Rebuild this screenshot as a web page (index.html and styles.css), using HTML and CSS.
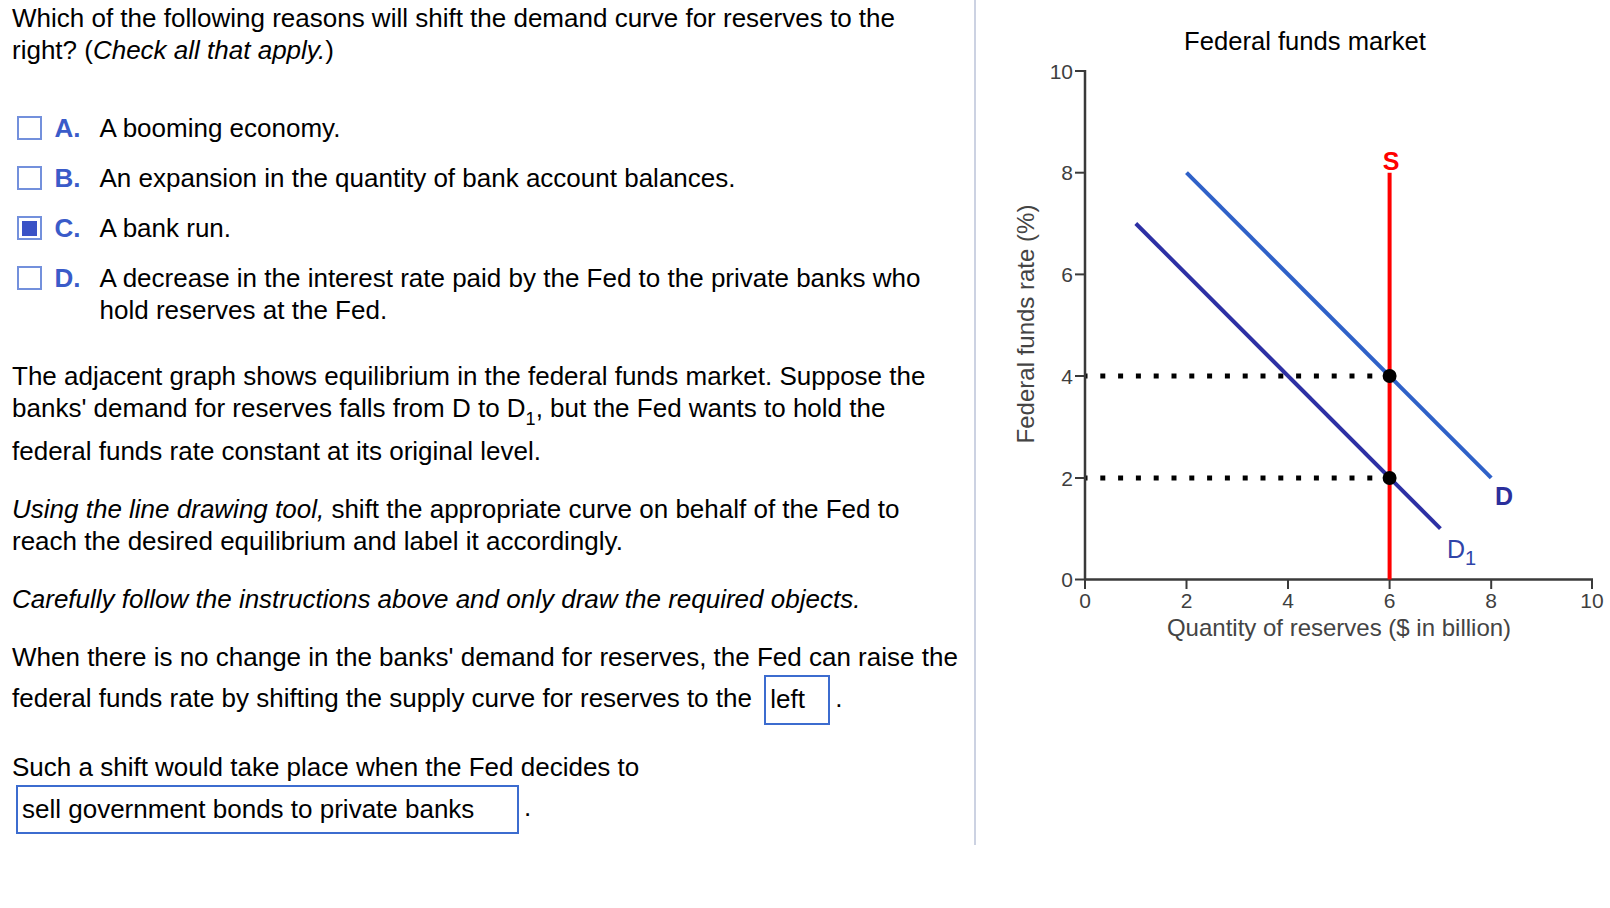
FILE: index.html
```html
<!DOCTYPE html>
<html lang="en">
<head>
  <meta charset="UTF-8">
  <title>Federal funds market</title>
  <link rel="stylesheet" href="styles.css">
</head>
<body>
  <div class="left">
    <p class="question">Which of the following reasons will shift the demand curve for reserves to the right? (<i>Check all that apply.</i>)</p>

    <!-- answer choices -->
    <div class="options">
      <div class="option">
        <span class="box"></span>
        <span class="letter">A.</span>
        <span class="text">A booming economy.</span>
      </div>
      <div class="option">
        <span class="box"></span>
        <span class="letter">B.</span>
        <span class="text">An expansion in the quantity of bank account balances.</span>
      </div>
      <div class="option">
        <span class="box checked"></span>
        <span class="letter">C.</span>
        <span class="text">A bank run.</span>
      </div>
      <div class="option">
        <span class="box"></span>
        <span class="letter">D.</span>
        <span class="text">A decrease in the interest rate paid by the Fed to the private banks who hold reserves at the Fed.</span>
      </div>
    </div>

    <p class="para">The adjacent graph shows equilibrium in the federal funds market. Suppose the banks' demand for reserves falls from D to D<sub>1</sub>, but the Fed wants to hold the federal funds rate constant at its original level.</p>
    <p class="para"><i>Using the line drawing tool,</i> shift the appropriate curve on behalf of the Fed to reach the desired equilibrium and label it accordingly.</p>
    <p class="para"><i>Carefully follow the instructions above and only draw the required objects.</i></p>
    <p class="para">When there is no change in the banks' demand for reserves, the Fed can raise the federal funds rate by shifting the supply curve for reserves to the <span class="answer short">left</span>.</p>
    <p class="para tight">Such a shift would take place when the Fed decides to <span class="answer long">sell government bonds to private banks</span>.</p>
  </div>

  <div class="right">
    <svg class="graph" width="632" height="660" viewBox="978 0 632 660">
      <text class="title" x="1307" y="50" text-anchor="middle">Federal funds market</text>

      <!-- dotted guides -->
      <line class="guide" x1="1087" y1="376" x2="1388" y2="376"/>
      <line class="guide" x1="1087" y1="478" x2="1388" y2="478"/>

      <!-- axes -->
      <line class="axis" x1="1087" y1="70" x2="1087" y2="580"/>
      <line class="axis" x1="1086" y1="579.5" x2="1595" y2="579.5"/>

      <g class="ticks">
        <line x1="1077" y1="71" x2="1087" y2="71"/>
        <line x1="1077" y1="172.7" x2="1087" y2="172.7"/>
        <line x1="1077" y1="274.4" x2="1087" y2="274.4"/>
        <line x1="1077" y1="376" x2="1087" y2="376"/>
        <line x1="1077" y1="478" x2="1087" y2="478"/>
        <line x1="1077" y1="579.5" x2="1087" y2="579.5"/>
        <line x1="1087" y1="579.5" x2="1087" y2="589"/>
        <line x1="1188.5" y1="579.5" x2="1188.5" y2="589"/>
        <line x1="1290" y1="579.5" x2="1290" y2="589"/>
        <line x1="1391.6" y1="579.5" x2="1391.6" y2="589"/>
        <line x1="1493.2" y1="579.5" x2="1493.2" y2="589"/>
        <line x1="1594" y1="579.5" x2="1594" y2="589"/>
      </g>

      <g class="tick-label" text-anchor="end">
        <text x="1075" y="78.5">10</text>
        <text x="1075" y="180.2">8</text>
        <text x="1075" y="281.9">6</text>
        <text x="1075" y="383.5">4</text>
        <text x="1075" y="485.5">2</text>
        <text x="1075" y="587">0</text>
      </g>
      <g class="tick-label" text-anchor="middle">
        <text x="1087" y="608">0</text>
        <text x="1188.5" y="608">2</text>
        <text x="1290" y="608">4</text>
        <text x="1391.6" y="608">6</text>
        <text x="1493.2" y="608">8</text>
        <text x="1594" y="608">10</text>
      </g>

      <text class="axis-label" x="1341" y="636" text-anchor="middle">Quantity of reserves ($ in billion)</text>
      <text class="axis-label" transform="translate(1036 324) rotate(-90)" text-anchor="middle">Federal funds rate (%)</text>

      <!-- curves -->
      <line class="curve-d" x1="1188.5" y1="172.7" x2="1493.2" y2="477.8"/>
      <line class="curve-d1" x1="1137.8" y1="223.5" x2="1442.4" y2="528.6"/>
      <line class="curve-s" x1="1391.6" y1="172.7" x2="1391.6" y2="579.5"/>

      <circle class="point" cx="1391.6" cy="376" r="7"/>
      <circle class="point" cx="1391.6" cy="478" r="7"/>

      <text class="label-s" x="1393" y="170" text-anchor="middle">S</text>
      <text class="label-d" x="1506" y="505" text-anchor="middle">D</text>
      <text class="label-d1" x="1449" y="558">D<tspan class="label-sub" dy="7">1</tspan></text>
    </svg>
  </div>
</body>
</html>
```

FILE: styles.css
```css
body {
  margin: 0;
  padding: 0;
  display: flex;
  align-items: flex-start;
  font-family: "Liberation Sans", Arial, sans-serif;
  color: #000;
  background-color: #fff;
}

.left {
  width: 976px;
  height: 845px;
  border-right: 2px solid #ccd2e2;
  padding: 2px 0 0 12px;
  box-sizing: border-box;
  font-size: 26px;
  line-height: 32px;
}

.left p {
  width: 952px;
  margin: 0;
}

.question {
  margin-bottom: 46px !important;
}

.options {
  width: 952px;
}

.option {
  display: flex;
  align-items: flex-start;
  margin-bottom: 18px;
}

.option:last-child {
  margin-bottom: 0;
}

.box {
  flex: none;
  width: 25px;
  height: 24px;
  margin: 4px 0 0 4.5px;
  border: 2px solid #7390dc;
  box-sizing: border-box;
  display: flex;
  align-items: center;
  justify-content: center;
}

.box.checked::after {
  content: "";
  width: 15px;
  height: 15px;
  background-color: #3a52c6;
}

.letter {
  flex: none;
  width: 45px;
  margin-left: 13px;
  color: #3a5bc9;
  font-weight: bold;
}

.text {
  flex: 1;
}

.para {
  margin-top: 26px !important;
}

.options + .para {
  margin-top: 34px !important;
}

.para.tight {
  margin-top: 24px !important;
}

sub {
  font-size: 18px;
  line-height: 32px;
  vertical-align: -8px;
}

.answer {
  display: inline-block;
  box-sizing: border-box;
  height: 50px;
  margin: 2px 5px 2px 4px;
  padding: 0 4px;
  border: 2px solid #3c6ccf;
  line-height: 44px;
  vertical-align: middle;
}

.answer.short {
  width: 66px;
  margin-left: 5px;
}

.answer.long {
  width: 503px;
  height: 49px;
}

.right {
  flex: none;
}

.graph {
  display: block;
  font-family: "Liberation Sans", Arial, sans-serif;
}

.title {
  font-size: 25.6px;
  fill: #000;
}

.axis {
  stroke: #3a3a3a;
  stroke-width: 2.5;
}

.ticks line {
  stroke: #3a3a3a;
  stroke-width: 2;
}

.tick-label {
  font-size: 21px;
  fill: #3f3f3f;
}

.axis-label {
  font-size: 24px;
  fill: #444;
}

.guide {
  stroke: #000;
  stroke-width: 5;
  stroke-dasharray: 5 12.8;
  stroke-dashoffset: 2.5;
}

.curve-d {
  stroke: #2f61c8;
  stroke-width: 4;
}

.curve-d1 {
  stroke: #2d30a4;
  stroke-width: 4;
}

.curve-s {
  stroke: #ff0000;
  stroke-width: 4;
}

.point {
  fill: #000;
}

.label-s {
  font-size: 25px;
  font-weight: bold;
  fill: #ff0000;
}

.label-d {
  font-size: 25px;
  font-weight: bold;
  fill: #2b2f9c;
}

.label-d1 {
  font-size: 25px;
  fill: #2f44a8;
}

.label-sub {
  font-size: 20px;
}
```
